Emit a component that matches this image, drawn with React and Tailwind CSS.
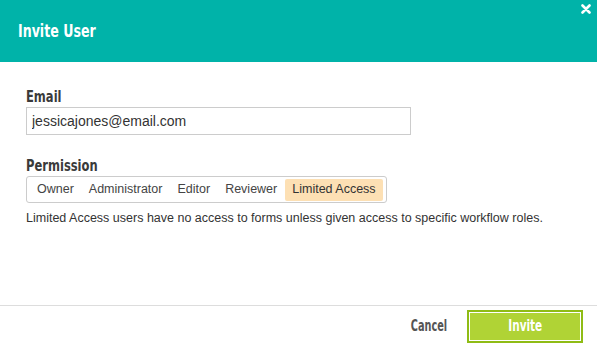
import { useState } from "react";

const roles = ["Owner", "Administrator", "Editor", "Reviewer", "Limited Access"];

const heading = { fontFamily: '"DejaVu Sans", sans-serif' };

const App = () => {
    const [email, setEmail] = useState("jessicajones@email.com");
    const [role, setRole] = useState("Limited Access");

    return (
        <div className="w-[597px] h-[347px] bg-white flex flex-col font-['Liberation_Sans',Arial,sans-serif] text-[#333]">
            {/* header */}
            <div className="relative h-[62px] bg-[#00b3a9] flex items-center pl-[18px] pb-[2px]">
                <h1 className="inline-block origin-left scale-x-[0.7] whitespace-nowrap text-white text-[18px] font-bold" style={heading}>
                    Invite User
                </h1>
                <button className="absolute right-[6px] top-[4px] leading-none" aria-label="Close">
                    <svg width="10" height="10" viewBox="0 0 10 10">
                        <path d="M1.5 1.5 L8.5 8.5 M8.5 1.5 L1.5 8.5" stroke="white" strokeWidth="2.6" strokeLinecap="round" />
                    </svg>
                </button>
            </div>

            {/* body */}
            <div className="flex-1 px-[26px] pt-[26px]">
                <label className="block origin-left scale-x-[0.72] text-[16px] font-bold text-[#3a3a3a] leading-[18px] mb-[1px]" style={heading}>
                    Email
                </label>
                <input
                    value={email}
                    onChange={(e) => setEmail(e.target.value)}
                    className="w-[385px] h-[28px] border border-[#ccc] px-[5px] text-[14px] text-[#333] outline-none"
                />

                <label className="block origin-left scale-x-[0.72] mt-[22px] text-[16px] font-bold text-[#3a3a3a] leading-[18px] mb-[1px]" style={heading}>
                    Permission
                </label>
                <div className="inline-flex items-center h-[27px] border border-[#ccc] rounded-[3px] px-[3px] gap-[1px]">
                    {roles.map((r) => (
                        <button
                            key={r}
                            onClick={() => setRole(r)}
                            className={`h-[22px] px-[7px] text-[12.5px] rounded-[2px] ${
                                role === r ? "bg-[#fde0b4] text-[#333]" : "text-[#444]"
                            }`}
                        >
                            {r}
                        </button>
                    ))}
                </div>
                <p className="mt-[6px] text-[12.5px] text-[#333]">
                    Limited Access users have no access to forms unless given access to specific workflow roles.
                </p>
            </div>

            {/* footer */}
            <div className="border-t border-[#ddd] h-[42px] flex items-center justify-end pr-[14px] gap-[21px]">
                <button className="w-[34px] flex justify-center">
                    <span className="inline-block scale-x-[0.65] text-[15px] font-bold text-[#555]" style={heading}>
                        Cancel
                    </span>
                </button>
                <button className="w-[116px] h-[33px] border-2 border-[#8fbc15] p-[1px] bg-white">
                    <span className="flex items-center justify-center w-full h-full bg-[#b0d335]">
                        <span className="inline-block scale-x-[0.7] text-white text-[15px] font-bold" style={heading}>
                            Invite
                        </span>
                    </span>
                </button>
            </div>
        </div>
    );
};

export default App;
